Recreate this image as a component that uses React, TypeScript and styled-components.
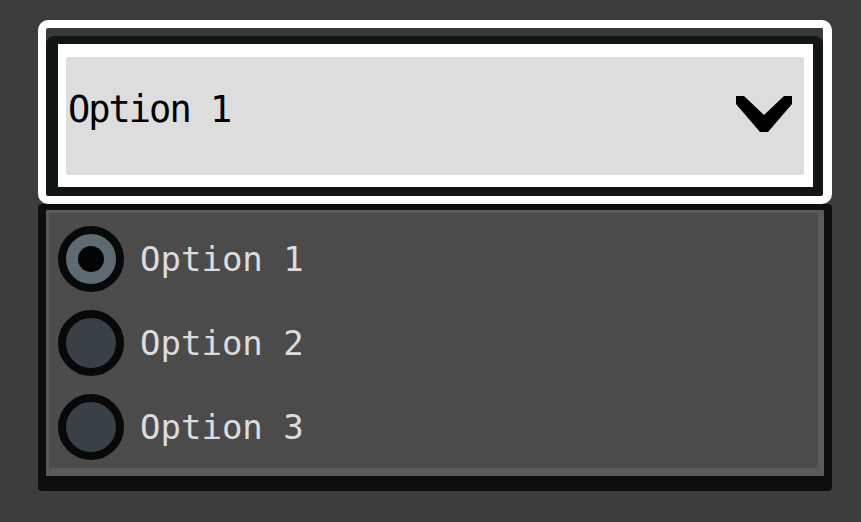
import styled, { createGlobalStyle } from 'styled-components';

const GlobalStyle = createGlobalStyle`
    html, body {
        margin: 0;
        padding: 0;
        background: #3c3c3c;
    }
`;

const options = ['Option 1', 'Option 2', 'Option 3'];

const StyledPage = styled.div`
    display: flex;
    flex-direction: column;
    width: 794px;
    padding: 20px 0 0 38px;
    font-family: 'DejaVu Sans Mono', 'Liberation Mono', monospace;
`;

// white focus ring round the select button
const StyledFocusRing = styled.div`
    border: 8px solid #ffffff;
    border-right-width: 9px;
    border-radius: 10px;
    padding-top: 8px;
    background: #393939;
`;

const StyledSelectButton = styled.div`
    border-style: solid;
    border-color: #121515;
    border-width: 8px 10px 9px 12px;
    border-radius: 8px 8px 4px 4px;
    background: #ffffff;
    padding: 13px 9px 12px 8px;
`;

const StyledSelectFace = styled.div`
    display: flex;
    align-items: center;
    justify-content: space-between;
    height: 118px;
    padding: 0 12px 14px 2px;
    box-sizing: border-box;
    background: #dddddd;
    border-radius: 2px;
`;

const StyledSelectedText = styled.span`
    font-size: 37px;
    letter-spacing: -2px;
    line-height: 1;
    color: #000000;
`;

const StyledChevron = styled.svg`
    display: block;
    margin-top: 10px;
`;

const StyledOptionList = styled.div`
    display: flex;
    flex-direction: column;
    gap: 18px;
    border-style: solid;
    border-color: #0d0f0f;
    border-width: 6px 8px 15px 8px;
    border-radius: 4px;
    background: #4b4b4b;
    box-shadow:
        inset 3px 3px 0 #5a5a5a,
        inset -6px -8px 0 #5a5a5a;
    padding: 16px 0 16px 12px;
`;

const StyledOptionRow = styled.div`
    display: flex;
    align-items: center;
    gap: 16px;
    height: 66px;
`;

const StyledOptionLabel = styled.span`
    font-size: 34px;
    line-height: 1;
    color: #dcdcdc;
`;

const Chevron = () => (
    <StyledChevron width="56" height="36" viewBox="0 0 56 36">
        <polygon
            points="0,0 8,0 28,19 48,0 56,0 56,8 32,36 24,36 0,8"
            fill="#000000"
        />
    </StyledChevron>
);

const RadioDot = ({ selected }: { selected: boolean }) => (
    <svg width="66" height="66" viewBox="0 0 66 66">
        <circle
            cx="33"
            cy="33"
            r="29"
            fill={selected ? '#5e6a72' : '#394046'}
            stroke="#070808"
            strokeWidth="8"
        />
        {selected && <circle cx="33" cy="33" r="13" fill="#050505" />}
    </svg>
);

export default function App() {
    const selected = 0;

    return (
        <>
            <GlobalStyle />
            <StyledPage>
                <StyledFocusRing>
                    <StyledSelectButton>
                        <StyledSelectFace>
                            <StyledSelectedText>{options[selected]}</StyledSelectedText>
                            <Chevron />
                        </StyledSelectFace>
                    </StyledSelectButton>
                </StyledFocusRing>
                <StyledOptionList>
                    {options.map((label, i) => (
                        <StyledOptionRow key={label}>
                            <RadioDot selected={i === selected} />
                            <StyledOptionLabel>{label}</StyledOptionLabel>
                        </StyledOptionRow>
                    ))}
                </StyledOptionList>
            </StyledPage>
        </>
    );
}
